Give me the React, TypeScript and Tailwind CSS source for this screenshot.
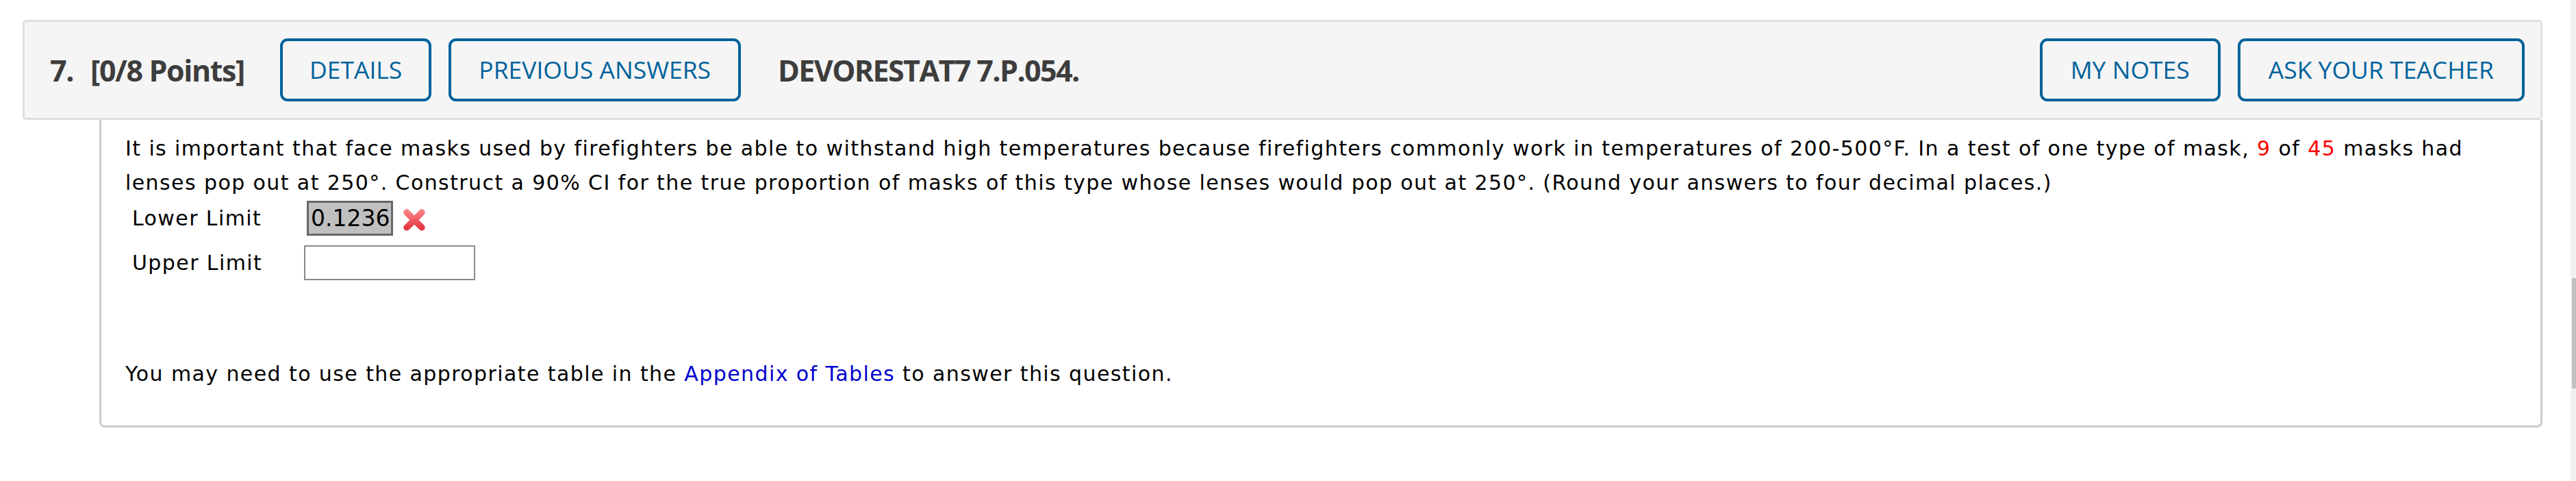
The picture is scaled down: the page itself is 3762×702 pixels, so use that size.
import React from "react";

const headFont = { fontFamily: '"Open Sans", "Liberation Sans", sans-serif' };

function Btn({ children, px = "px-[41px]" }: { children: React.ReactNode; px?: string }) {
  return (
    <div className={`h-[92px] ${px} flex items-center border-[4px] border-[#00629b] rounded-[11px] text-[#00629b] text-[35.5px] leading-none whitespace-nowrap`}>
      {children}
    </div>
  );
}

function RedX() {
  return (
    <svg width="36" height="36" viewBox="0 0 36 36">
      <defs>
        <linearGradient id="xg" x1="0" y1="0" x2="0" y2="1">
          <stop offset="0" stopColor="#f87c80" />
          <stop offset="1" stopColor="#e53a43" />
        </linearGradient>
      </defs>
      <path d="M7 7 L29 29 M29 7 L7 29" stroke="url(#xg)" strokeWidth="9.5" strokeLinecap="round" fill="none" />
    </svg>
  );
}

export default function App() {
  return (
    <div className="w-full h-[702px] bg-white flex overflow-hidden">
      <div className="flex-1 pt-[29px] pl-[33px] pr-[41px]">
        <div
          className="h-[146px] border-[3px] border-[#dfdfdf] bg-[#f5f5f5] rounded-[5px] flex items-center pl-[37px] pr-[23px]"
          style={headFont}
        >
          <div className="text-[43px] font-bold tracking-[-1.4px] text-[#3d3d3d] leading-none whitespace-nowrap flex items-center">
            <span>7.</span>
            <span className="ml-[25px]">[0/8 Points]</span>
          </div>
          <div className="ml-[52px] flex items-center gap-[25px]">
            <Btn px="px-[39px]">DETAILS</Btn>
            <Btn px="px-[40px]">PREVIOUS ANSWERS</Btn>
          </div>
          <div className="ml-[54px] text-[43px] font-bold tracking-[-1.6px] text-[#3d3d3d] leading-none whitespace-nowrap">
            DEVORESTAT7 7.P.054.
          </div>
          <div className="ml-auto flex items-center gap-[25px]">
            <Btn>MY NOTES</Btn>
            <Btn>ASK YOUR TEACHER</Btn>
          </div>
        </div>
        <div
          className="ml-[112px] h-[449px] border-l-[3px] border-r-[3px] border-b-[3px] border-[#cccccc] rounded-b-[8px] pl-[35px] pt-[17px] text-black"
          style={{ fontFamily: '"DejaVu Sans", Verdana, sans-serif' }}
        >
          <p className="text-[30px] leading-[50px] tracking-[1.41px] whitespace-nowrap">
            It is important that face masks used by firefighters be able to withstand high temperatures because firefighters commonly work in temperatures of 200-500°F. In a test of one type of mask,{" "}
            <span className="text-[#ff0000]">9</span> of <span className="text-[#ff0000]">45</span> masks had
            <br />
            lenses pop out at 250°. Construct a 90% CI for the true proportion of masks of this type whose lenses would pop out at 250°. (Round your answers to four decimal places.)
          </p>
          <div className="mt-[1px] flex flex-col gap-[14px] pl-[10px] text-[30px] tracking-[1.41px]">
            <div className="flex items-center h-[51px]">
              <span className="w-[255px]">Lower Limit</span>
              <div className="h-[51px] w-[126px] border-[3px] border-[#666666] bg-[#c0c0c0] flex items-center pl-[3px] text-[33px] leading-none tracking-normal">
                0.1236
              </div>
              <div className="ml-[13px] mt-[4px]">
                <RedX />
              </div>
            </div>
            <div className="flex items-center h-[51px]">
              <span className="w-[251px]">Upper Limit</span>
              <div className="h-[51px] w-[250px] border-[2px] border-[#8a8a8a] bg-white" />
            </div>
          </div>
          <p className="mt-[112px] text-[30px] leading-[50px] tracking-[1.41px] whitespace-nowrap">
            You may need to use the appropriate table in the{" "}
            <span className="text-[#0000cc]">Appendix of Tables</span> to answer this question.
          </p>
        </div>
      </div>
      <div className="w-[8px] h-full bg-[#f1f1f1] flex justify-end">
        <div className="w-[6px] h-[161px] mt-[406px] bg-[#c1c1c1]" />
      </div>
    </div>
  );
}
